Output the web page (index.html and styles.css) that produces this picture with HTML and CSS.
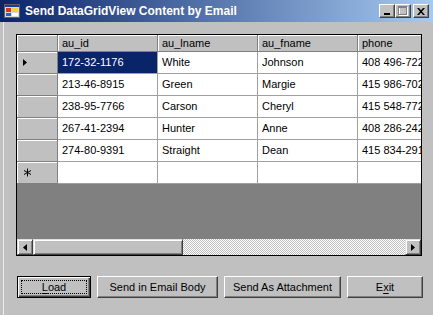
FILE: index.html
```html
<!DOCTYPE html>
<html>
<head>
<meta charset="utf-8">
<title>Send DataGridView Content by Email</title>
<link rel="stylesheet" href="styles.css">
</head>
<body>
<div class="window">
  <div class="caption">
    <svg class="app-icon" width="16" height="16" viewBox="0 0 16 16">
      <rect x="0.5" y="1.5" width="15" height="13" fill="#d8d8d8" stroke="#606060"/>
      <rect x="1" y="2" width="14" height="2" fill="#1040a0"/>
      <rect x="2" y="5" width="5" height="4" fill="#e03020"/>
      <rect x="8" y="5" width="6" height="4" fill="#f8d030"/>
      <rect x="2" y="10" width="5" height="3" fill="#3060d0"/>
      <rect x="8" y="10" width="6" height="3" fill="#ffffff"/>
    </svg>
    <span class="title">Send DataGridView Content by Email</span>
    <div class="cap-buttons">
      <span class="cap-btn"><svg width="8" height="7" viewBox="0 0 8 7"><rect x="1" y="5" width="6" height="2" fill="#000"/></svg></span>
      <span class="cap-btn"><svg width="10" height="10" viewBox="0 0 10 10"><rect x="1.5" y="1.5" width="8" height="8" fill="none" stroke="#fff"/><rect x="0.5" y="0.5" width="8" height="8" fill="none" stroke="#808080"/><rect x="1" y="1" width="8" height="1" fill="#808080"/></svg></span>
      <span class="cap-btn close"><svg width="8" height="7" viewBox="0 0 8 7"><path d="M0 0h2l2 2.2 2-2.2h2l-3 3.5 3 3.5h-2l-2-2.2-2 2.2h-2l3-3.5z" fill="#000"/></svg></span>
    </div>
  </div>
  <div class="client">
    <div class="grid">
      <div class="table">
        <div class="row head">
          <div class="hc"></div>
          <div class="hc">au_id</div>
          <div class="hc">au_lname</div>
          <div class="hc">au_fname</div>
          <div class="hc">phone</div>
        </div>
        <div class="row">
          <div class="rh"><svg width="4" height="7" viewBox="0 0 4 7"><path d="M0 0L4 3.5L0 7z" fill="#000"/></svg></div>
          <div class="c sel">172-32-1176</div>
          <div class="c">White</div>
          <div class="c">Johnson</div>
          <div class="c">408 496-7223</div>
        </div>
        <div class="row">
          <div class="rh"></div>
          <div class="c">213-46-8915</div>
          <div class="c">Green</div>
          <div class="c">Margie</div>
          <div class="c">415 986-7020</div>
        </div>
        <div class="row">
          <div class="rh"></div>
          <div class="c">238-95-7766</div>
          <div class="c">Carson</div>
          <div class="c">Cheryl</div>
          <div class="c">415 548-7723</div>
        </div>
        <div class="row">
          <div class="rh"></div>
          <div class="c">267-41-2394</div>
          <div class="c">Hunter</div>
          <div class="c">Anne</div>
          <div class="c">408 286-2428</div>
        </div>
        <div class="row">
          <div class="rh"></div>
          <div class="c">274-80-9391</div>
          <div class="c">Straight</div>
          <div class="c">Dean</div>
          <div class="c">415 834-2919</div>
        </div>
        <div class="row">
          <div class="rh"><svg width="9" height="9" viewBox="0 0 9 9"><path d="M4.5 0.5V8.5M1 2.5L8 6.5M1 6.5L8 2.5" stroke="#000" stroke-width="1" fill="none"/></svg></div>
          <div class="c"></div>
          <div class="c"></div>
          <div class="c"></div>
          <div class="c"></div>
        </div>
      </div>
      <div class="workspace"></div>
      <div class="hscroll">
        <span class="sb-btn"><svg width="4" height="7" viewBox="0 0 4 7"><path d="M4 0L0 3.5L4 7z" fill="#000"/></svg></span>
        <span class="thumb"></span>
        <span class="track"></span>
        <span class="sb-btn"><svg width="4" height="7" viewBox="0 0 4 7"><path d="M0 0L4 3.5L0 7z" fill="#000"/></svg></span>
      </div>
    </div>
    <div class="buttons">
      <button class="btn default w-load"><u>L</u>oad</button>
      <button class="btn w-body">Send in Email Body</button>
      <button class="btn w-attach">Send As Attachment</button>
      <button class="btn w-exit">E<u>x</u>it</button>
    </div>
  </div>
</div>
</body>
</html>
```

FILE: styles.css
```css
html, body {
  margin: 0;
  padding: 0;
  background: #c0c0c0;
}

body {
  font-family: "Liberation Sans", Arial, sans-serif;
  font-size: 11px;
  color: #000;
}

.window {
  width: 433px;
  height: 315px;
  display: flex;
  flex-direction: column;
  background: #c0c0c0;
  overflow: hidden;
}

.caption {
  flex: none;
  height: 22px;
  display: flex;
  align-items: center;
  padding: 0 4px 0 4px;
  background: linear-gradient(to right, #0a246a, #a6caf0);
}

.app-icon {
  flex: none;
  margin-right: 5px;
}

.title {
  flex: 1;
  color: #fff;
  font-weight: bold;
  font-size: 12px;
  white-space: nowrap;
}

.cap-buttons {
  display: flex;
  flex: none;
}

.cap-btn {
  width: 16px;
  height: 14px;
  box-sizing: border-box;
  background: #c0c0c0;
  border: 1px solid;
  border-color: #fff #404040 #404040 #fff;
  box-shadow: inset -1px -1px #808080;
  display: flex;
  align-items: center;
  justify-content: center;
}

.cap-btn.close {
  margin-left: 2px;
}

.client {
  flex: 1;
  margin-left: 3px;
  border-left: 1px solid #ececec;
  padding: 12px 0 0 12px;
  display: flex;
  flex-direction: column;
}

.grid {
  width: 406px;
  height: 222px;
  box-sizing: border-box;
  border: 1px solid #000;
  display: flex;
  flex-direction: column;
  background: #808080;
}

.table {
  flex: none;
  overflow: hidden;
}

.row {
  display: grid;
  grid-template-columns: 41px 100px 100px 100px 100px;
  width: 441px;
}

.hc, .rh, .c {
  box-sizing: border-box;
  white-space: nowrap;
  overflow: hidden;
  border-right: 1px solid #808080;
  border-bottom: 1px solid #808080;
}

.hc {
  height: 17px;
  line-height: 16px;
  padding-left: 4px;
  background: #c0c0c0;
  box-shadow: inset 1px 1px #fff;
}

.rh {
  height: 22px;
  background: #c0c0c0;
  box-shadow: inset 1px 1px #fff;
  display: flex;
  align-items: center;
  padding-left: 6px;
}

.c {
  height: 22px;
  line-height: 21px;
  padding-left: 4px;
  background: #fff;
  border-color: #a0a0a0;
}

.c.sel {
  background: #0a246a;
  color: #fff;
}

.workspace {
  flex: 1;
}

.hscroll {
  flex: none;
  height: 16px;
  display: flex;
}

.sb-btn, .thumb {
  box-sizing: border-box;
  height: 16px;
  background: #c0c0c0;
  border: 1px solid;
  border-color: #e0e0e0 #404040 #404040 #e0e0e0;
  box-shadow: inset 1px 1px #fff, inset -1px -1px #808080;
}

.sb-btn {
  width: 16px;
  flex: none;
  display: flex;
  align-items: center;
  justify-content: center;
}

.thumb {
  width: 150px;
  flex: none;
}

.track {
  flex: 1;
  background: repeating-conic-gradient(#ffffff 0 25%, #c0c0c0 0 50%) 0 0 / 2px 2px;
}

.buttons {
  display: flex;
  gap: 6px;
  margin-top: 20px;
  margin-left: 1px;
}

.btn {
  box-sizing: border-box;
  height: 22px;
  padding: 0;
  margin: 0;
  background: #c0c0c0;
  border: 1px solid;
  border-color: #fff #404040 #404040 #fff;
  box-shadow: inset -1px -1px #808080;
  font-family: "Liberation Sans", Arial, sans-serif;
  font-size: 11px;
  color: #000;
  display: flex;
  align-items: center;
  justify-content: center;
}

.btn.default {
  border: 1px solid #000;
  box-shadow: inset 1px 1px #fff, inset -1px -1px #404040, inset -2px -2px #808080;
  outline: 1px dotted #000;
  outline-offset: -5px;
}

.btn u {
  text-decoration: underline;
  text-underline-offset: 2px;
}

.w-load { width: 74px; }
.w-body { width: 121px; }
.w-attach { width: 117px; }
.w-exit { width: 76px; }
```
